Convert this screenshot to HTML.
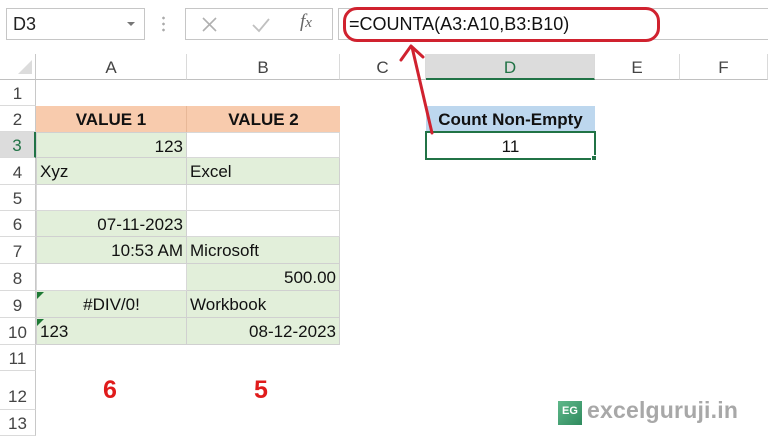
<!DOCTYPE html>
<html><head><style>
body{margin:0;width:768px;height:436px;background:#fff;position:relative;overflow:hidden;font-family:"Liberation Sans",sans-serif;}
.a{position:absolute;box-sizing:border-box;}
.c{position:absolute;box-sizing:border-box;font-size:17px;color:#111;line-height:28px;padding:0 3px;white-space:nowrap;overflow:hidden;}
.r{text-align:right}.m{text-align:center}
.g{background:#e2efda}.p{background:#f8cbad;font-weight:bold;text-align:center}
.rh{position:absolute;left:0;width:36px;text-align:center;font-size:17px;color:#444;box-sizing:border-box;border-bottom:1px solid #dadada;border-right:1px solid #c8c8c8;background:#fff}
.ch{position:absolute;top:54px;height:26px;line-height:28px;text-align:center;font-size:17px;color:#444;border-right:1px solid #dadada;border-bottom:1px solid #c0c0c0;box-sizing:border-box}
.tri{position:absolute;width:0;height:0;border-top:7px solid #1e7a35;border-right:7px solid transparent}
</style></head><body>
<div class="a" style="left:6px;top:8px;width:139px;height:32px;border:1px solid #c6c6c6;font-size:18px;line-height:31px;padding-left:6px;color:#222">D3</div>
<div class="a" style="left:127px;top:22px;width:0;height:0;border-left:4px solid transparent;border-right:4px solid transparent;border-top:4px solid #777"></div>
<div class="a" style="left:162px;top:15px;width:3px;height:18px;background:radial-gradient(circle,#aaa 1.2px,transparent 1.5px) 0 0/3px 6px"></div>
<div class="a" style="left:185px;top:8px;width:148px;height:32px;border:1px solid #c6c6c6"></div>
<svg class="a" style="left:200px;top:15px" width="20" height="20"><path d="M3 3L16 16M16 3L3 16" stroke="#b0b0b0" stroke-width="1.6"/></svg>
<svg class="a" style="left:250px;top:15px" width="22" height="20"><path d="M3 10L9 16L19 4" stroke="#c0c0c0" stroke-width="1.8" fill="none"/></svg>
<div class="a" style="left:300px;top:11px;font-family:'Liberation Serif',serif;font-style:italic;font-size:19px;color:#666">f<span style="font-size:15px">x</span></div>
<div class="a" style="left:338px;top:8px;width:440px;height:32px;border:1px solid #c6c6c6;border-right:none"></div>
<div class="a" style="left:349px;top:8px;font-size:18px;line-height:33px;color:#111">=COUNTA(A3:A10,B3:B10)</div>
<div class="a" style="left:343px;top:7px;width:317px;height:35px;border:3px solid #d0222f;border-radius:14px"></div>
<div class="a" style="left:0;top:54px;width:36px;height:26px;background:#fff;border-right:1px solid #c8c8c8;border-bottom:1px solid #c0c0c0"></div>
<div class="a" style="left:18px;top:60px;width:0;height:0;border-left:14px solid transparent;border-bottom:14px solid #dcdcdc"></div>
<div class="ch" style="left:36px;width:151px">A</div>
<div class="ch" style="left:187px;width:153px">B</div>
<div class="ch" style="left:340px;width:86px">C</div>
<div class="ch" style="left:426px;width:169px;background:#dcdcdc;color:#217346;border-bottom:2px solid #217346">D</div>
<div class="ch" style="left:595px;width:85px">E</div>
<div class="ch" style="left:680px;width:88px">F</div>
<div class="rh" style="top:80px;height:26px;line-height:28px">1</div>
<div class="rh" style="top:106px;height:26px;line-height:28px">2</div>
<div class="rh" style="top:132px;height:26px;line-height:28px;background:#dcdcdc;color:#217346;border-right:2px solid #217346">3</div>
<div class="rh" style="top:158px;height:27px;line-height:29px">4</div>
<div class="rh" style="top:185px;height:26px;line-height:28px">5</div>
<div class="rh" style="top:211px;height:26px;line-height:28px">6</div>
<div class="rh" style="top:237px;height:27px;line-height:29px">7</div>
<div class="rh" style="top:264px;height:27px;line-height:29px">8</div>
<div class="rh" style="top:291px;height:27px;line-height:29px">9</div>
<div class="rh" style="top:318px;height:27px;line-height:29px">10</div>
<div class="rh" style="top:345px;height:26px;line-height:28px">11</div>
<div class="rh" style="top:371px;height:39px;line-height:52px">12</div>
<div class="rh" style="top:410px;height:26px;line-height:28px">13</div>
<div class="c p" style="left:36px;top:106px;width:151px;height:26px;border-right:1px solid #e8b898">VALUE 1</div>
<div class="c p" style="left:187px;top:106px;width:153px;height:26px">VALUE 2</div>
<div class="c g r" style="left:36px;top:132px;width:151px;height:26px;border:1px solid #d0d0d0">123</div>
<div class="c" style="left:187px;top:132px;width:153px;height:26px;border:1px solid #d8d8d8;border-left:none"></div>
<div class="c g" style="left:36px;top:158px;width:151px;height:27px;border:1px solid #d0d0d0;border-top:none">Xyz</div>
<div class="c g" style="left:187px;top:158px;width:153px;height:27px;border:1px solid #d0d0d0;border-left:none;border-top:none">Excel</div>
<div class="c" style="left:36px;top:185px;width:151px;height:26px;border:1px solid #d8d8d8;border-top:none"></div>
<div class="c" style="left:187px;top:185px;width:153px;height:26px;border:1px solid #d8d8d8;border-left:none;border-top:none"></div>
<div class="c g r" style="left:36px;top:211px;width:151px;height:26px;border:1px solid #d0d0d0;border-top:none">07-11-2023</div>
<div class="c" style="left:187px;top:211px;width:153px;height:26px;border:1px solid #d8d8d8;border-left:none;border-top:none"></div>
<div class="c g r" style="left:36px;top:237px;width:151px;height:27px;border:1px solid #d0d0d0;border-top:none">10:53 AM</div>
<div class="c g" style="left:187px;top:237px;width:153px;height:27px;border:1px solid #d0d0d0;border-left:none;border-top:none">Microsoft</div>
<div class="c" style="left:36px;top:264px;width:151px;height:27px;border:1px solid #d8d8d8;border-top:none"></div>
<div class="c g r" style="left:187px;top:264px;width:153px;height:27px;border:1px solid #d0d0d0;border-left:none;border-top:none">500.00</div>
<div class="c g m" style="left:36px;top:291px;width:151px;height:27px;border:1px solid #d0d0d0;border-top:none">#DIV/0!</div>
<div class="c g" style="left:187px;top:291px;width:153px;height:27px;border:1px solid #d0d0d0;border-left:none;border-top:none">Workbook</div>
<div class="c g" style="left:36px;top:318px;width:151px;height:27px;border:1px solid #d0d0d0;border-top:none">123</div>
<div class="c g r" style="left:187px;top:318px;width:153px;height:27px;border:1px solid #d0d0d0;border-left:none;border-top:none">08-12-2023</div>
<div class="tri" style="left:37px;top:292px"></div>
<div class="tri" style="left:37px;top:319px"></div>
<div class="c" style="left:426px;top:106px;width:169px;height:26px;background:#bdd7ee;font-weight:bold;text-align:center;padding:0">Count Non-Empty</div>
<div class="c m" style="left:425px;top:131px;width:171px;height:29px;border:2px solid #217346;line-height:27px">11</div>
<div class="a" style="left:591px;top:155px;width:6px;height:6px;background:#217346;border:1px solid #fff"></div>
<div class="a" style="left:103px;top:376px;font-size:25px;font-weight:bold;color:#e01b1b">6</div>
<div class="a" style="left:254px;top:376px;font-size:25px;font-weight:bold;color:#e01b1b">5</div>
<svg class="a" style="left:395px;top:38px" width="50" height="100"><path d="M37 95L17 9M6 22L16 8L28 19" stroke="#d0222f" stroke-width="3" fill="none" stroke-linecap="round" stroke-linejoin="round"/></svg>
<div class="a" style="left:558px;top:401px;width:24px;height:24px;background:linear-gradient(135deg,#5fb88a,#2f8a5e);color:#fff;font-size:11px;font-weight:bold;text-align:center;line-height:20px">EG</div>
<div class="a" style="left:587px;top:397px;font-size:23px;font-weight:bold;color:#a8a8a8;letter-spacing:0.2px">excelguruji.in</div>
</body></html>
